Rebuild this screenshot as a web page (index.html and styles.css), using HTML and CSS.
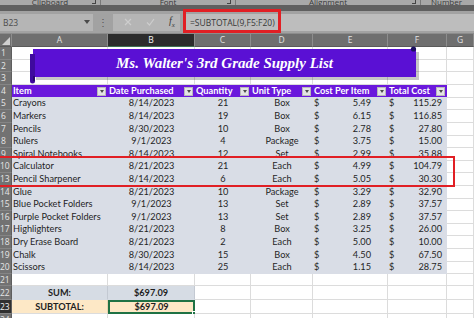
FILE: index.html
```html
<!DOCTYPE html>
<html lang="en">
<head>
    <meta charset="UTF-8">
    <title>Ms. Walter's 3rd Grade Supply List</title>
    <link rel="stylesheet" href="styles.css">
</head>
<body>
    <div class="app">
        <div class="ribbon-groups">
            <div class="group g-clip"><span>Clipboard</span><i class="launch"></i></div>
            <div class="group g-font"><span>Font</span><i class="launch"></i></div>
            <div class="group g-align"><span>Alignment</span><i class="launch"></i></div>
            <div class="group g-num"><span>Number</span></div>
        </div>
        <div class="ribbon-edge"></div>

        <div class="formula-bar">
            <div class="name-box">
                <span>B23</span>
                <svg class="caret" width="6" height="4" viewBox="0 0 6 4"><path d="M0 0h6L3 4z" fill="#4a4a4a"/></svg>
            </div>
            <div class="grip">⋮</div>
            <div class="fx-buttons">
                <svg class="btn-x" width="8" height="8" viewBox="0 0 8 8"><path d="M1 1l6 6M7 1L1 7" stroke="#cdcdcd" stroke-width="1.2"/></svg>
                <svg class="btn-ok" width="9" height="8" viewBox="0 0 9 8"><path d="M1 4.5l2.5 2.5L8 1" fill="none" stroke="#cdcdcd" stroke-width="1.2"/></svg>
                <span class="fx">f<sub>x</sub></span>
            </div>
            <div class="formula-input">=SUBTOTAL(9,F5:F20)</div>
        </div>

        <div class="sheet">
            <div class="row heads">
                <div class="corner"></div>
                <div class="col-head">A</div>
                <div class="col-head active">B</div>
                <div class="col-head">C</div>
                <div class="col-head">D</div>
                <div class="col-head">E</div>
                <div class="col-head">F</div>
                <div class="col-head">G</div>
            </div>

            <div class="row"><div class="rh">1</div><div></div><div></div><div></div><div></div><div></div><div></div><div></div></div>
            <div class="row"><div class="rh">2</div><div></div><div></div><div></div><div></div><div></div><div></div><div></div></div>
            <div class="row"><div class="rh">3</div><div></div><div></div><div></div><div></div><div></div><div></div><div></div></div>

            <div class="row table-head">
                <div class="rh">4</div>
                <div class="th">Item<i class="filter"></i></div>
                <div class="th">Date Purchased<i class="filter"></i></div>
                <div class="th">Quantity<i class="filter"></i></div>
                <div class="th">Unit Type<i class="filter"></i></div>
                <div class="th">Cost Per Item<i class="filter"></i></div>
                <div class="th">Total Cost<i class="filter"></i></div>
                <div></div>
            </div>

            <div class="row item"><div class="rh">5</div><div>Crayons</div><div class="c">8/14/2023</div><div class="c">21</div><div class="c">Box</div><div class="money cost"><span>$</span><span>5.49</span></div><div class="money total"><span>$</span><span>115.29</span></div><div></div></div>
            <div class="row item"><div class="rh">6</div><div>Markers</div><div class="c">8/14/2023</div><div class="c">19</div><div class="c">Box</div><div class="money cost"><span>$</span><span>6.15</span></div><div class="money total"><span>$</span><span>116.85</span></div><div></div></div>
            <div class="row item"><div class="rh">7</div><div>Pencils</div><div class="c">8/30/2023</div><div class="c">10</div><div class="c">Box</div><div class="money cost"><span>$</span><span>2.78</span></div><div class="money total"><span>$</span><span>27.80</span></div><div></div></div>
            <div class="row item"><div class="rh">8</div><div>Rulers</div><div class="c">9/1/2023</div><div class="c">4</div><div class="c">Package</div><div class="money cost"><span>$</span><span>3.75</span></div><div class="money total"><span>$</span><span>15.00</span></div><div></div></div>
            <div class="row item"><div class="rh">9</div><div>Spiral Notebooks</div><div class="c">8/14/2023</div><div class="c">12</div><div class="c">Set</div><div class="money cost"><span>$</span><span>2.99</span></div><div class="money total"><span>$</span><span>35.88</span></div><div></div></div>
            <div class="row item"><div class="rh">10</div><div>Calculator</div><div class="c">8/21/2023</div><div class="c">21</div><div class="c">Each</div><div class="money cost"><span>$</span><span>4.99</span></div><div class="money total"><span>$</span><span>104.79</span></div><div></div></div>
            <div class="row item"><div class="rh">13</div><div>Pencil Sharpener</div><div class="c">8/14/2023</div><div class="c">6</div><div class="c">Each</div><div class="money cost"><span>$</span><span>5.05</span></div><div class="money total"><span>$</span><span>30.30</span></div><div></div></div>
            <div class="row item"><div class="rh">14</div><div>Glue</div><div class="c">8/21/2023</div><div class="c">10</div><div class="c">Package</div><div class="money cost"><span>$</span><span>3.29</span></div><div class="money total"><span>$</span><span>32.90</span></div><div></div></div>
            <div class="row item"><div class="rh">15</div><div>Blue Pocket Folders</div><div class="c">9/1/2023</div><div class="c">13</div><div class="c">Set</div><div class="money cost"><span>$</span><span>2.89</span></div><div class="money total"><span>$</span><span>37.57</span></div><div></div></div>
            <div class="row item"><div class="rh">16</div><div>Purple Pocket Folders</div><div class="c">9/1/2023</div><div class="c">13</div><div class="c">Set</div><div class="money cost"><span>$</span><span>2.89</span></div><div class="money total"><span>$</span><span>37.57</span></div><div></div></div>
            <div class="row item"><div class="rh">17</div><div>Highlighters</div><div class="c">8/21/2023</div><div class="c">8</div><div class="c">Box</div><div class="money cost"><span>$</span><span>3.25</span></div><div class="money total"><span>$</span><span>26.00</span></div><div></div></div>
            <div class="row item"><div class="rh">18</div><div>Dry Erase Board</div><div class="c">8/21/2023</div><div class="c">2</div><div class="c">Each</div><div class="money cost"><span>$</span><span>5.00</span></div><div class="money total"><span>$</span><span>10.00</span></div><div></div></div>
            <div class="row item"><div class="rh">19</div><div>Chalk</div><div class="c">8/30/2023</div><div class="c">15</div><div class="c">Box</div><div class="money cost"><span>$</span><span>4.50</span></div><div class="money total"><span>$</span><span>67.50</span></div><div></div></div>
            <div class="row item"><div class="rh">20</div><div>Scissors</div><div class="c">8/14/2023</div><div class="c">25</div><div class="c">Each</div><div class="money cost"><span>$</span><span>1.15</span></div><div class="money total"><span>$</span><span>28.75</span></div><div></div></div>

            <div class="row"><div class="rh">21</div><div></div><div></div><div></div><div></div><div></div><div></div><div></div></div>
            <div class="row tall">
                <div class="rh">22</div>
                <div class="c sum">SUM:</div>
                <div class="c sum">$697.09</div>
                <div></div><div></div><div></div><div></div><div></div>
            </div>
            <div class="row tall">
                <div class="rh active">23</div>
                <div class="c sub">SUBTOTAL:</div>
                <div class="c sub selected">$697.09<i class="handle"></i></div>
                <div></div><div></div><div></div><div></div><div></div>
            </div>
            <div class="row"><div class="rh">24</div><div></div><div></div><div></div><div></div><div></div><div></div><div></div></div>
        </div>

        <!-- scroll shape floating over rows 1-3 -->
        <div class="banner">
            <svg width="390" height="40" viewBox="0 0 390 40">
                <rect x="6" y="6" width="383" height="28" fill="#000" opacity="0.22"/>
                <rect x="3" y="3" width="383" height="28" fill="#5a10d4"/>
                <path d="M0 8h5v27a2.5 2.5 0 0 1-5 0z" fill="#3f0a9e"/>
                <path d="M3 30h2v5h-2z" fill="#2a0870"/>
                <circle cx="383.5" cy="3" r="2.6" fill="#1c1060"/>
            </svg>
            <div class="banner-title">Ms. Walter's 3rd Grade Supply List</div>
        </div>

        <div class="callout callout-formula"></div>
        <div class="callout callout-rows"></div>
    </div>
</body>
</html>
```

FILE: styles.css
```css
body {
    margin: 0;
    background-color: #fff;
    font-family: Lato, 'Liberation Sans', sans-serif;
}

.app {
    position: relative;
    width: 474px;
    height: 318px;
    overflow: hidden;
}

/* ribbon group labels, cut off at the top */
.ribbon-groups {
    display: flex;
    height: 5px;
    background-color: #a8a8a8;
    overflow: hidden;
}

.group {
    display: flex;
    align-items: flex-end;
    justify-content: center;
    position: relative;
    height: 5px;
    border-right: 1px solid #7a7a7a;
    box-sizing: border-box;
}

.group span {
    font-family: 'Open Sans', sans-serif;
    font-size: 8px;
    line-height: 8px;
    color: #3a3a3a;
    margin-bottom: -1px;
}

.launch {
    position: absolute;
    right: 4px;
    bottom: 1px;
    width: 3px;
    height: 3px;
    border-right: 1px solid #444;
    border-bottom: 1px solid #444;
}

.g-clip { width: 101px; }
.g-font { width: 135px; }
.g-align { width: 185px; }
.g-num { flex: 1; justify-content: flex-start; padding-left: 10px; border-right: none; }

.ribbon-edge {
    height: 6px;
    background-color: #5f5f5f;
}

/* formula bar */
.formula-bar {
    display: flex;
    align-items: center;
    height: 22px;
    background-color: #a2a2a2;
    border-bottom: 1px solid #8c8c8c;
    font-family: 'Open Sans', sans-serif;
    font-size: 8.5px;
    color: #3a3a3a;
}

.name-box {
    display: flex;
    align-items: center;
    justify-content: space-between;
    width: 93px;
    height: 17px;
    padding: 0 3px;
    box-sizing: border-box;
    background-color: #b5b5b5;
    color: #4c4c4c;
}

.grip {
    width: 20px;
    text-align: center;
    font-size: 10px;
    color: #555;
}

.fx-buttons {
    display: flex;
    align-items: center;
    width: 67px;
    height: 17px;
    padding-left: 11px;
    gap: 14px;
    box-sizing: border-box;
    background-color: #b5b5b5;
}

.fx {
    font-family: 'Liberation Serif', serif;
    font-style: italic;
    font-size: 10px;
    color: #3a3a3a;
}

.fx sub {
    font-size: 7px;
}

.formula-input {
    flex: 1;
    height: 17px;
    line-height: 17px;
    margin-left: 5px;
    padding-left: 5px;
    background-color: #bdbdbd;
    color: #383838;
}

/* grid */
.row {
    display: grid;
    grid-template-columns: 12px 96px 87px 56px 62px 75px 59px 1fr;
    height: 12.6px;
    font-size: 9.2px;
    line-height: 12px;
    color: #1f1f1f;
}

.row > div {
    position: relative;
    border-right: 1px solid #dcdcdc;
    border-bottom: 1px solid #dcdcdc;
    box-sizing: border-box;
    white-space: nowrap;
    overflow: visible;
}

.row.tall {
    height: 14px;
}

.row.tall > div {
    line-height: 13px;
}

.heads {
    height: 13px;
    background-color: #6f6f6f;
}

.heads > div {
    border-right-color: #8d8d8d;
    border-bottom-color: #5a5a5a;
    text-align: center;
    font-family: 'Open Sans', sans-serif;
    font-size: 8.5px;
    color: #e2e2e2;
}

.heads .col-head.active {
    background-color: #2c2c2c;
    color: #f4f4f4;
    border-bottom: 1px solid #3f6f52;
}

.corner::after {
    content: '';
    position: absolute;
    right: 1px;
    bottom: 1px;
    border-left: 8px solid transparent;
    border-bottom: 8px solid #d0d0d0;
}

.row > .rh {
    overflow: hidden;
    padding-right: 4px;
    text-align: center;
    background-color: #727272;
    border-right-color: #5e5e5e;
    border-bottom-color: #858585;
    font-family: 'Open Sans', sans-serif;
    font-size: 8.5px;
    color: #e6e6e6;
}

.row > .rh.active {
    background-color: #303030;
    color: #f0f0f0;
}

/* table */
.table-head > div:not(.rh):not(:last-child) {
    background-color: #6a18dc;
    border-color: #6a18dc;
    color: #fff;
    font-weight: bold;
    padding-left: 1px;
}

.filter {
    position: absolute;
    right: 1px;
    top: 2px;
    width: 9px;
    height: 9px;
    box-sizing: border-box;
    background-color: #e4e4e4;
    border: 1px solid #b9b9b9;
}

.filter::after {
    content: '';
    position: absolute;
    left: 1.5px;
    top: 2.5px;
    border-left: 2.5px solid transparent;
    border-right: 2.5px solid transparent;
    border-top: 3px solid #4a4a4a;
}

.item > div:not(.rh):not(:last-child) {
    background-color: #d9dde6;
    border-color: #d9dde6;
    padding-left: 1px;
}

.row > .c {
    text-align: center;
    padding-left: 0;
}

.row > .money {
    display: flex;
    justify-content: space-between;
}

.row > .money.cost {
    padding: 0 16px 0 4px;
}

.row > .money.total {
    padding: 0 4px 0 3px;
}

.row > .sum {
    background-color: #d6dce4;
    border-right-color: #c3c9d2;
    border-bottom-color: #d6dce4;
    font-weight: bold;
}

.row > .sub {
    background-color: #fde8c6;
    border-right-color: #e7d3b2;
    font-weight: bold;
}

.row > .sub.selected {
    border: 2px solid #1f7244;
    line-height: 10px;
}

.handle {
    position: absolute;
    right: -3px;
    bottom: -3px;
    width: 4px;
    height: 4px;
    background-color: #1f7244;
    border: 1px solid #fff;
    box-sizing: border-box;
}

/* title scroll shape */
.banner {
    position: absolute;
    left: 30px;
    top: 46px;
    width: 390px;
    height: 40px;
}

.banner svg {
    display: block;
}

.banner-title {
    position: absolute;
    left: 3px;
    top: 3px;
    width: 383px;
    height: 28px;
    line-height: 28px;
    text-align: center;
    font-family: 'Liberation Serif', serif;
    font-style: italic;
    font-weight: bold;
    font-size: 15px;
    color: #fff;
}

/* red annotation boxes */
.callout {
    position: absolute;
    box-sizing: border-box;
}

.callout-formula {
    left: 183px;
    top: 9px;
    width: 98px;
    height: 24px;
    border: 3px solid #e11f24;
}

.callout-rows {
    left: -3px;
    top: 156px;
    width: 458px;
    height: 31px;
    border: 2px solid #e11f24;
}
```
